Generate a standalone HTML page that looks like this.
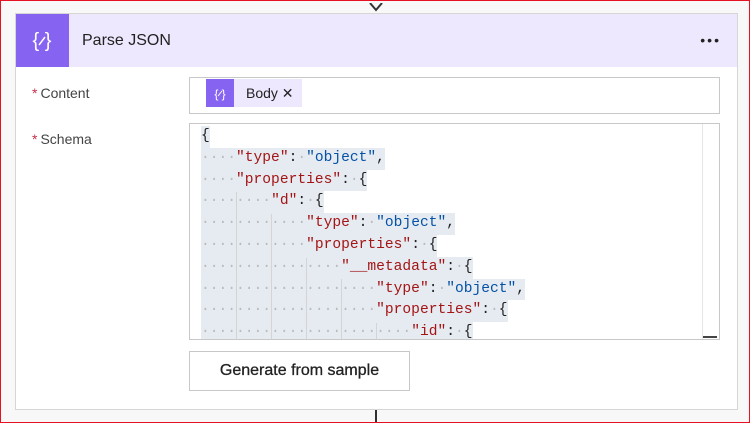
<!DOCTYPE html>
<html><head><meta charset="utf-8"><style>
*{margin:0;padding:0;box-sizing:border-box}
body{width:750px;height:423px;overflow:hidden;background:#f8f8f8;font-family:"Liberation Sans",sans-serif;position:relative}
.frame{position:absolute;left:0;top:0;width:750px;height:423px;border:1px solid #e81123;pointer-events:none;z-index:10}
.card{position:absolute;left:15px;top:13px;width:723px;height:397px;background:#fff;border:1px solid #d6d6d6}
.hdr{position:absolute;left:0;top:0;width:721px;height:53px;background:#ede8fd}
.ico{position:absolute;left:0;top:0;width:53px;height:53px;background:#8763f2}
.title{position:absolute;left:66px;top:18px;font-size:16px;color:#222}
.dots{position:absolute;right:16px;top:18px;font-size:14px;color:#222;letter-spacing:2px}
.lbl{position:absolute;font-size:14px;color:#444}
.lbl b{color:#c4314b;font-weight:normal;margin-right:3px}
.box{position:absolute;border:1px solid #c8c8c8;background:#fff}
.tok{position:absolute;left:16px;top:1px;height:28px;width:96px;background:#ede8fd}
.tokico{position:absolute;left:0;top:0;width:28px;height:28px;background:#8763f2}
.tok span{position:absolute;left:40px;top:6px;font-size:14px;color:#222}
.code{position:absolute;left:11px;top:2px;font-family:"Liberation Mono",monospace;font-size:14.6px;line-height:21.8px;white-space:pre}
.code div{display:table;background:#e6ebf2;color:#222}
.k{color:#a31515}.s{color:#0451a5}.d{color:#bbb}
.g{position:absolute;bottom:0;width:1px;background:#d4d4d4}
.btn{position:absolute;left:189px;top:351px;width:221px;height:40px;border:1px solid #c8c8c8;background:#fff;font-size:16px;color:#222;text-align:center;line-height:38px;-webkit-text-stroke:0.3px #222}
</style></head><body>
<div style="position:absolute;left:369px;top:0;width:14px;height:10px">
<svg width="14" height="10"><path d="M1 0 L7 7 L13 0" stroke="#333" stroke-width="2" fill="none"/></svg></div>
<div class="card">
 <div class="hdr">
  <div class="ico"><svg width="53" height="53"><text x="26" y="33" font-family="Liberation Sans" font-size="20" fill="#fff" text-anchor="middle">{ }</text><path d="M23 31 L29 23" stroke="#fff" stroke-width="1.5"/></svg></div>
  <div class="title">Parse JSON</div>
  <div class="dots">•••</div>
 </div>
</div>
<div class="lbl" style="left:32px;top:85px"><b>*</b>Content</div>
<div class="lbl" style="left:32px;top:131px"><b>*</b>Schema</div>
<div class="box" style="left:189px;top:77px;width:531px;height:37px">
 <div class="tok"><div class="tokico"><svg width="28" height="28"><text x="14" y="19" font-family="Liberation Sans" font-size="12" fill="#fff" text-anchor="middle">{ }</text><path d="M12 17 L16 12" stroke="#fff" stroke-width="1"/></svg></div><span>Body &#x2715;</span></div>
</div>
<div class="box" style="left:189px;top:123px;width:531px;height:217px;overflow:hidden">
 <div style="position:absolute;right:0;top:0;width:17px;height:215px;border-left:1px solid #e6e6e6"></div>
 <div style="position:absolute;right:2px;bottom:1px;width:14px;height:2px;background:#444"></div>
 <div class="code"><div>{</div><div><span class="d">····</span><span class="k">"type"</span>:<span class="d">·</span><span class="s">"object"</span>,</div><div><span class="d">····</span><span class="k">"properties"</span>:<span class="d">·</span>{</div><div><span class="d">········</span><span class="k">"d"</span>:<span class="d">·</span>{</div><div><span class="d">············</span><span class="k">"type"</span>:<span class="d">·</span><span class="s">"object"</span>,</div><div><span class="d">············</span><span class="k">"properties"</span>:<span class="d">·</span>{</div><div><span class="d">················</span><span class="k">"__metadata"</span>:<span class="d">·</span>{</div><div><span class="d">····················</span><span class="k">"type"</span>:<span class="d">·</span><span class="s">"object"</span>,</div><div><span class="d">····················</span><span class="k">"properties"</span>:<span class="d">·</span>{</div><div><span class="d">························</span><span class="k">"id"</span>:<span class="d">·</span>{</div></div>
 <div class="g" style="left:46px;top:68px"></div>
 <div class="g" style="left:81px;top:90px"></div>
 <div class="g" style="left:116px;top:134px"></div>
 <div class="g" style="left:151px;top:155px"></div>
 <div class="g" style="left:186px;top:199px"></div>
</div>
<div class="btn">Generate from sample</div>
<div style="position:absolute;left:375px;top:410px;width:2px;height:12px;background:#333"></div>
<div class="frame"></div>
</body></html>
